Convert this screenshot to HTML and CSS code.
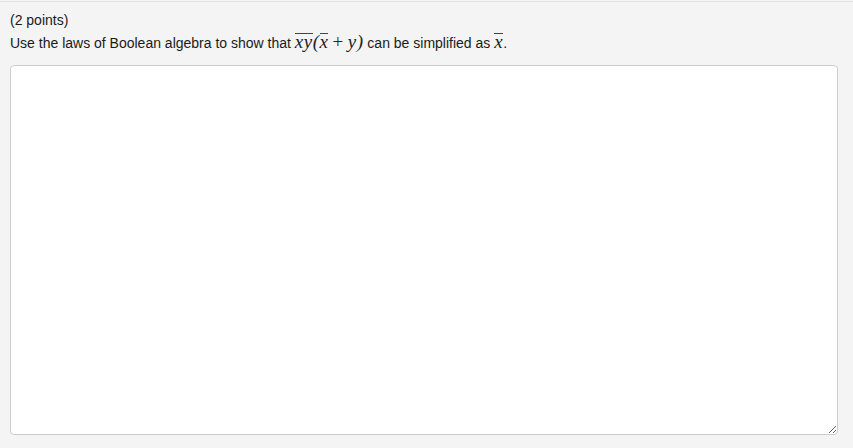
FILE: index.html
```html
<!DOCTYPE html>
<html>
<head>
<meta charset="utf-8">
<link rel="stylesheet" href="styles.css">
</head>
<body>
<div class="problem">
  <div class="points">(2 points)</div>
  <div class="question">Use the laws of Boolean algebra to show that <span class="math"><span class="ov">xy</span>(<span class="ov">x</span><span class="op">+</span>y)</span> can be simplified as <span class="math"><span class="ov">x</span></span>.</div>
  <textarea class="answer"></textarea>
</div>
</body>
</html>
```

FILE: styles.css
```css
html, body {
  margin: 0;
  padding: 0;
  background: #f4f4f4;
}
body {
  font-family: "Liberation Sans", Arial, sans-serif;
  font-size: 14px;
  color: #1a1a1a;
}
.problem {
  margin-top: 1px;
  border-top: 1px solid #e2e2e2;
  padding: 10px 15px 0 10px;
}
.points {
  line-height: 17px;
}
.question {
  line-height: 24px;
  margin-top: 1px;
}
.math {
  font-family: "Liberation Serif", "Times New Roman", serif;
  font-style: italic;
  font-size: 19px;
  letter-spacing: 0.5px;
  color: #222;
}
.ov {
  display: inline-block;
  line-height: 12px;
  border-top: 1px solid #444;
  padding-top: 2px;
}
.op {
  font-style: normal;
  margin: 0 4px;
}
.answer {
  display: block;
  box-sizing: border-box;
  width: 828px;
  height: 370px;
  margin-top: 10px;
  border: 1px solid #cccccc;
  border-radius: 4px;
  background: #fff;
  padding: 6px;
  font-family: "Liberation Sans", Arial, sans-serif;
  font-size: 14px;
}
```
